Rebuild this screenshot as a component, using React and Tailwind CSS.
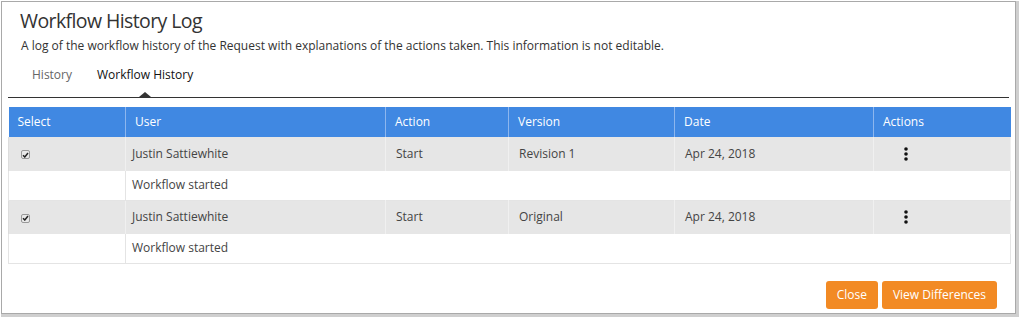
const rows = [
  { user: "Justin Sattiewhite", action: "Start", version: "Revision 1", date: "Apr 24, 2018", note: "Workflow started" },
  { user: "Justin Sattiewhite", action: "Start", version: "Original", date: "Apr 24, 2018", note: "Workflow started" },
];

const Kebab = () => (
  <svg width="4" height="14" viewBox="0 0 4 14" className="mx-auto">
    <circle cx="2" cy="2" r="1.8" fill="#111" />
    <circle cx="2" cy="7" r="1.8" fill="#111" />
    <circle cx="2" cy="12" r="1.8" fill="#111" />
  </svg>
);

const Check = () => (
  <span className="inline-flex h-[9px] w-[9px] items-center justify-center rounded-[2px] border border-[#999] bg-[#e9e9e9] align-middle">
    <svg width="7" height="6" viewBox="0 0 7 6">
      <path d="M1 3.2 L2.8 5 L6 1" stroke="#222" strokeWidth="1.5" fill="none" />
    </svg>
  </span>
);

export default function App() {
  return (
    <div className="h-[321px] w-[1022px] bg-white pl-[1px] pt-[1px]" style={{ fontFamily: '"Open Sans", sans-serif' }}>
      <div className="h-[316px] w-[1018px] border-b-[3px] border-r-[3px] border-b-[#cfcfcf] border-r-[#cfcfcf]">
        <div className="flex h-full flex-col border border-[#a9a9a9] bg-white">
          <div className="px-[19px] pt-[4px]">
            <h1 className="-ml-[1px] text-[19.5px] leading-[30px] tracking-[-0.6px] text-[#333]">Workflow History Log</h1>
            <p className="mt-[1px] text-[12px] leading-[18px] text-[#333]">
              A log of the workflow history of the Request with explanations of the actions taken. This information is not editable.
            </p>
          </div>
          <div className="mx-[6px] mt-[11px] flex border-b border-[#333] pl-[24px] text-[12px]">
            <div className="pb-[13px] text-[#666]">History</div>
            <div className="relative ml-[25px] pb-[13px] text-[#111]">
              Workflow History
              <span className="absolute bottom-0 left-1/2 h-0 w-0 -translate-x-1/2 border-x-[6px] border-b-[5px] border-x-transparent border-b-[#333]" />
            </div>
          </div>
          <div className="mx-[6px] mt-[9px]">
            <table className="w-[1002px] table-fixed border-collapse text-[12px] text-[#444]">
              <colgroup>
                <col className="w-[117px]" />
                <col className="w-[260px]" />
                <col className="w-[123px]" />
                <col className="w-[166px]" />
                <col className="w-[199px]" />
                <col className="w-[137px]" />
              </colgroup>
              <thead>
                <tr className="h-[30px] bg-[#4088e2] text-left text-white">
                  {["Select", "User", "Action", "Version", "Date", "Actions"].map((h, i) => (
                    <th key={h} className={`font-normal ${i === 0 ? "pl-[9px]" : "border-l border-[#8db6ee] pl-[9px]"}`}>
                      {h}
                    </th>
                  ))}
                </tr>
              </thead>
              <tbody>
                {rows.map((r, i) => (
                  <>
                    <tr key={`a${i}`} className="h-[34px] bg-[#e6e6e6]">
                      <td className="border-l border-[#dcdcdc] pl-[12px]"><Check /></td>
                      <td className="border-l border-[#f0f0f0] pl-[6px]">{r.user}</td>
                      <td className="border-l border-[#f0f0f0] pl-[10px]">{r.action}</td>
                      <td className="border-l border-[#f0f0f0] pl-[10px]">{r.version}</td>
                      <td className="border-l border-[#f0f0f0] pl-[10px]">{r.date}</td>
                      <td className="border-x border-[#f0f0f0] pr-[72px]"><Kebab /></td>
                    </tr>
                    <tr key={`b${i}`} className="h-[29px] border-b border-[#e4e4e4] bg-white">
                      <td className="border-l border-[#e4e4e4]"></td>
                      <td colSpan={5} className="border-x border-[#e4e4e4] pl-[6px]">{r.note}</td>
                    </tr>
                  </>
                ))}
              </tbody>
            </table>
          </div>
          <div className="mt-auto flex justify-end gap-[4px] pb-[4px] pr-[18px]">
            <button className="h-[28px] rounded-[3px] bg-[#f28a24] px-[11px] text-[12px] text-white">Close</button>
            <button className="h-[28px] rounded-[3px] bg-[#f28a24] px-[11px] text-[12px] text-white">View Differences</button>
          </div>
        </div>
      </div>
    </div>
  );
}
